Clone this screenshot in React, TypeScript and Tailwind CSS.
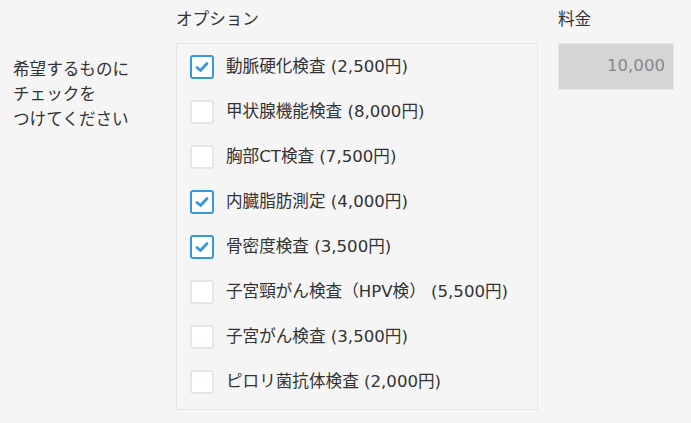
const OPTIONS = [
  { label: "動脈硬化検査 (2,500円)", checked: true },
  { label: "甲状腺機能検査 (8,000円)", checked: false },
  { label: "胸部CT検査 (7,500円)", checked: false },
  { label: "内臓脂肪測定 (4,000円)", checked: true },
  { label: "骨密度検査 (3,500円)", checked: true },
  { label: "子宮頸がん検査（HPV検） (5,500円)", checked: false },
  { label: "子宮がん検査 (3,500円)", checked: false },
  { label: "ピロリ菌抗体検査 (2,000円)", checked: false },
];

const Check = ({ checked }: { checked: boolean }) => (
  <span
    className={
      checked
        ? "flex h-6 w-6 shrink-0 items-center justify-center rounded-[3px] border-2 border-[#3498db] bg-white"
        : "flex h-6 w-6 shrink-0 items-center justify-center rounded-[3px] border-2 border-[#e3e7e8] bg-white"
    }
  >
    {checked && (
      <svg width="14" height="12" viewBox="0 0 14 12">
        <path
          d="M2 6.5 L5.5 9.5 L12 2.5"
          fill="none"
          stroke="#3498db"
          strokeWidth="2.8"
          strokeLinecap="round"
          strokeLinejoin="round"
        />
      </svg>
    )}
  </span>
);

export default function App() {
  return (
    <div
      className="min-h-screen w-full bg-[#f5f5f5] text-[16.6px] text-[#333]"
      style={{ fontFamily: '"DejaVu Sans", "Noto Sans CJK JP", sans-serif' }}
    >
      <div className="flex">
        {/* label */}
        <div className="w-[176px] shrink-0 pl-[13px] pt-[57px] leading-[25px]">
          希望するものに
          <br />
          チェックを
          <br />
          つけてください
        </div>

        {/* options */}
        <div className="flex w-[362px] flex-col">
          <div className="pt-2 pb-[11px] leading-6">オプション</div>
          <div className="border border-[#e3e7e8] pb-[5px]">
            {OPTIONS.map((o) => (
              <label
                key={o.label}
                className="flex h-[45px] items-center gap-3 pl-[13px] leading-6"
              >
                <Check checked={o.checked} />
                <span className="whitespace-nowrap">{o.label}</span>
              </label>
            ))}
          </div>
        </div>

        {/* price */}
        <div className="ml-5 flex flex-col">
          <div className="pt-2 pb-[11px] leading-6">料金</div>
          <div className="flex h-[47px] w-[116px] items-center justify-end border border-[#e3e7e8] bg-[#d4d6d6] pr-[8px] text-[#888]">
            10,000
          </div>
        </div>
      </div>
    </div>
  );
}
